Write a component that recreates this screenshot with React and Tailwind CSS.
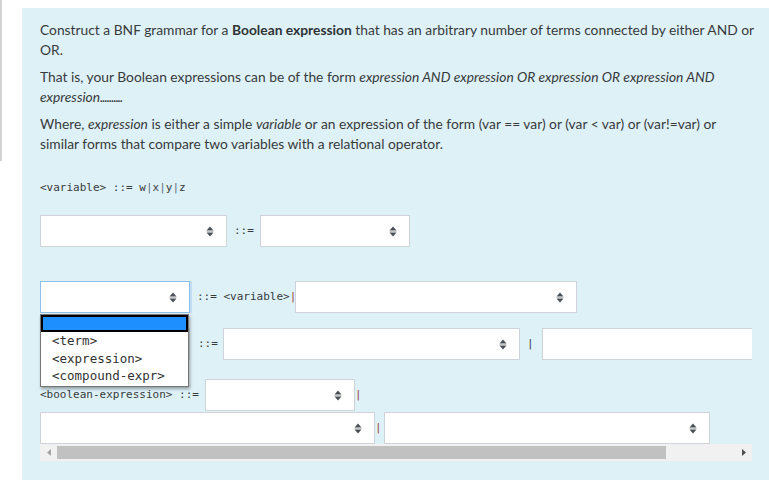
import React from "react";

const mono = "font-['DejaVu_Sans_Mono',monospace] text-[11px] leading-[16px] text-[#373a3c]";

function Arrows() {
  return (
    <svg width="8" height="11" viewBox="0 0 8 11" className="shrink-0">
      <path d="M4 0.5 L7.5 4.5 H0.5 Z" fill="#495057" />
      <path d="M0.5 5.5 H7.5" stroke="#c7c7c7" strokeWidth="1" />
      <path d="M0.5 6.5 H7.5 L4 10.5 Z" fill="#495057" />
    </svg>
  );
}

function Select({ className = "", focus = false }) {
  return (
    <div
      className={`flex h-[32px] shrink-0 items-center justify-end bg-white pr-[12px] ${
        focus ? "border border-[#8dbfe9] shadow-[2px_0_0_#c3def4]" : "border border-[#ced4da]"
      } ${className}`}
    >
      <Arrows />
    </div>
  );
}

function Pipe({ color = "text-[#a4453f]", className = "" }) {
  return <span className={`${mono} ${color} ${className}`}>|</span>;
}

export default function App() {
  return (
    <div className="flex h-[480px] w-[769px] overflow-hidden bg-white font-['Lato',sans-serif] text-[13.8px] leading-[20px] text-[#373a3c]">
      <div className="w-[22px] shrink-0">
        <div className="h-[161px] w-[2px] bg-[#d4d4d4]" />
      </div>

      <div className="mt-[8px] flex-1 bg-[#def1f7] pl-[18px] pt-[12px]">
        <p className="whitespace-nowrap">
          Construct a BNF grammar for a <b className="font-bold text-[#2f3336]">Boolean expression</b> that has an arbitrary number of terms connected by either AND or
          <br />
          OR.
        </p>
        <p className="mt-[7px] whitespace-nowrap">
          That is, your Boolean expressions can be of the form <i>expression AND expression OR expression OR expression AND</i>
          <br />
          <i>expression<span className="tracking-[-1px]">..........</span></i>
        </p>
        <p className="mt-[7px] whitespace-nowrap">
          Where, <i>expression</i> is either a simple <i>variable</i> or an expression of the form (var == var) or (var &lt; var) or (var!=var) or
          <br />
          similar forms that compare two variables with a relational operator.
        </p>

        <div className={`${mono} mt-[26px]`}>
          &lt;variable&gt; ::= w<span className="text-[#5b6d82]">|</span>x<span className="text-[#5b6d82]">|</span>y<span className="text-[#5b6d82]">|</span>z
        </div>

        <div className="relative w-[712px]">
          <div className="w-[712px] overflow-hidden">
            <div className="mt-[19px] flex items-center">
              <Select className="w-[187px]" />
              <span className={`${mono} ml-[7px]`}>::=</span>
              <Select className="ml-[6px] w-[150px]" />
            </div>

            <div className="mt-[34px] flex items-center">
              <Select className="w-[150px]" focus />
              <span className={`${mono} ml-[7px]`}>::= &lt;variable&gt;</span>
              <Pipe />
              <Select className="-ml-[1px] w-[282px]" />
            </div>

            <div className="mt-[15px] flex items-center">
              <Select className="w-[150px]" />
              <span className={`${mono} ml-[8px]`}>::=</span>
              <Select className="ml-[5px] w-[297px]" />
              <Pipe color="text-[#2f73b5]" className="ml-[7px]" />
              <div className="ml-[8px] h-[32px] w-[211px] shrink-0 border border-[#ced4da] bg-white" />
            </div>

            <div className="mt-[19px] flex items-center">
              <span className={mono}>&lt;boolean-expression&gt; ::=</span>
              <Select className="ml-[6px] w-[150px]" />
              <Pipe />
            </div>

            <div className="mt-px flex items-center">
              <Select className="w-[335px]" />
              <Pipe />
              <Select className="ml-[2px] w-[326px]" />
            </div>
          </div>

          <div className="flex h-[17px] w-[712px] items-center bg-[#f1f1f1]">
            <div className="flex h-[17px] w-[17px] items-center justify-center">
              <svg width="4" height="7" viewBox="0 0 4 7">
                <path d="M4 0 V7 L0 3.5 Z" fill="#a3a3a3" />
              </svg>
            </div>
            <div className="h-[13px] w-[609px] bg-[#c1c1c1]" />
            <div className="flex-1" />
            <div className="flex h-[17px] w-[17px] items-center justify-center">
              <svg width="4" height="7" viewBox="0 0 4 7">
                <path d="M0 0 V7 L4 3.5 Z" fill="#505050" />
              </svg>
            </div>
          </div>

          <div className="absolute left-0 top-[118px] w-[149px] border border-[#767676] bg-white shadow-[1px_2px_3px_rgba(0,0,0,0.35)]">
            <div className="h-[17px] border-2 border-black bg-[#1e8fff]" />
            <div className="flex flex-col pb-[1px] pl-[11px] font-['DejaVu_Sans_Mono',monospace] text-[12.5px] leading-[17.5px] text-[#333]">
              <span>&lt;term&gt;</span>
              <span>&lt;expression&gt;</span>
              <span>&lt;compound-expr&gt;</span>
            </div>
          </div>
        </div>
      </div>
    </div>
  );
}
